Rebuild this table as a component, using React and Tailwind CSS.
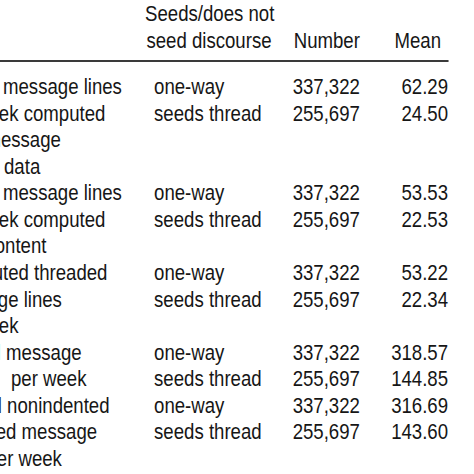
const ROWS = [
  {
    label: ['Parent message lines', 'per week computed', 'from message', 'source data'],
    means: ['62.29', '24.50'],
  },
  {
    label: ['Parent message lines', 'per week computed', 'from content'],
    means: ['53.53', '22.53'],
  },
  {
    label: ['Computed threaded', 'message lines', 'per week'],
    means: ['53.22', '22.34'],
  },
  {
    label: ['Posted message', { text: 'per week', indent: true }],
    means: ['318.57', '144.85'],
  },
  {
    label: ['Thread nonindented', 'threaded message', 'lines per week'],
    means: ['316.69', '143.60'],
  },
];

const SEEDS = ['one-way', 'seeds thread'];
const COUNTS = ['337,322', '255,697'];

// no narrow face installed: squeeze Liberation Sans to Arial Narrow proportions
export default function App() {
  return (
    <div className="h-[474px] w-[474px] overflow-hidden bg-white text-[22.7px] text-[#161616] font-['Liberation_Sans',Arial,sans-serif]">
      <div className="w-[578px] origin-top-left scale-x-[0.82]">
        <div className="-ml-[69.5px] w-[616px] whitespace-nowrap">
          {/* header */}
          <div className="grid grid-cols-[246.4px_156px_106px_107.5px] leading-[27px]">
            <div />
            <div className="text-center">
              <div>Seeds/does not</div>
              <div>seed discourse</div>
            </div>
            <div className="flex items-end justify-end">Number</div>
            <div className="flex items-end justify-end pr-[8.5px]">Mean</div>
          </div>
          <div className="mt-[6px] border-t-2 border-[#3a3a3a]" />

          {/* body */}
          <div className="pt-[11px] leading-[26.57px]">
            {ROWS.map((row, i) => (
              <div key={i} className="grid grid-cols-[246.4px_156px_106px_107.5px]">
                <div>
                  {row.label.map((line, j) =>
                    typeof line === 'string' ? (
                      <div key={j}>{line}</div>
                    ) : (
                      <div key={j} className="pl-[82.9px]">
                        {line.text}
                      </div>
                    )
                  )}
                </div>
                <div className="pl-[11px]">
                  {SEEDS.map((s) => (
                    <div key={s}>{s}</div>
                  ))}
                </div>
                <div className="text-right">
                  {COUNTS.map((c) => (
                    <div key={c}>{c}</div>
                  ))}
                </div>
                <div className="text-right">
                  {row.means.map((m) => (
                    <div key={m}>{m}</div>
                  ))}
                </div>
              </div>
            ))}
          </div>
        </div>
      </div>
    </div>
  );
}
